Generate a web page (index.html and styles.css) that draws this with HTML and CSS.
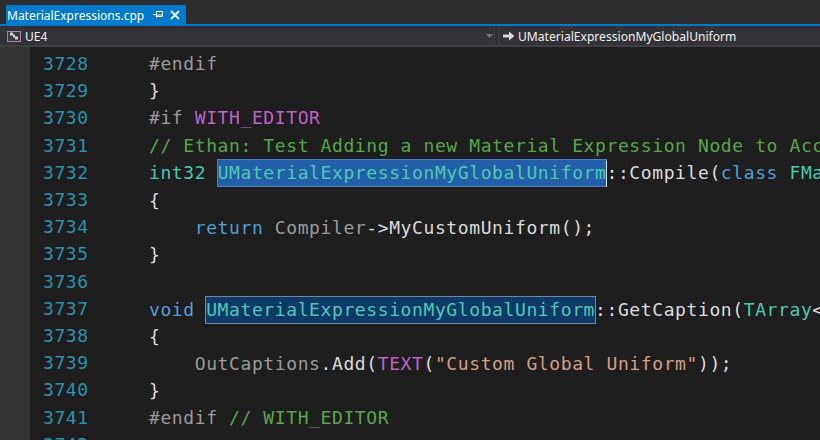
FILE: index.html
```html
<!DOCTYPE html>
<html lang="en">
<head>
<meta charset="utf-8">
<title>MaterialExpressions.cpp</title>
<link rel="stylesheet" href="styles.css">
</head>
<body>
<div class="tabstrip">
  <div class="tab">
    <span class="tab-name">MaterialExpressions.cpp</span>
    <svg class="tab-pin" width="11" height="9" viewBox="0 0 11 9"><path d="M0 4.500h3M3.500 1v7M3.500 1.500H9.500V6.500H3.500M3.500 5H9.500" fill="none" stroke="#fff" stroke-width="1"/></svg>
    <svg class="tab-close" width="10" height="10" viewBox="0 0 10 10"><path d="M1 1l8 8M9 1l-8 8" stroke="#e8f2fb" stroke-width="1.800" fill="none"/></svg>
  </div>
</div>
<div class="navbar">
  <div class="nav-left">
    <svg class="proj-icon" width="14" height="11" viewBox="0 0 14 11"><rect x=".5" y=".5" width="13" height="10" fill="#3a3a3d" stroke="#b27fb5"/><path d="M3 1.500h3v2h2v2h3v3H8v-2H6v-2H3z" fill="#d8d8d8"/></svg>
    <span class="nav-text">UE4</span>
    <svg class="nav-caret" width="7" height="4" viewBox="0 0 7 4"><path d="M0 0h7L3.500 4z" fill="#77777a"/></svg>
  </div>
  <div class="nav-right">
    <svg class="nav-arrow" width="12" height="10" viewBox="0 0 12 10"><path d="M0 3.500h6V.5L11.500 5 6 9.500v-3H0z" fill="#d8d8d8"/></svg>
    <span class="nav-text">UMaterialExpressionMyGlobalUniform</span>
  </div>
</div>
<div class="editor">
  <div class="gutter"></div>
  <div class="numbers">
    <div>3728</div><div>3729</div><div>3730</div><div>3731</div><div>3732</div><div>3733</div><div>3734</div><div>3735</div><div>3736</div><div>3737</div><div>3738</div><div>3739</div><div>3740</div><div>3741</div><div>3742</div>
  </div>
  <div class="code">
    <div class="line pp">#endif</div>
    <div class="line">}</div>
    <div class="line"><span class="pp">#if</span> <span class="macro">WITH_EDITOR</span></div>
    <div class="line cm">// Ethan: Test Adding a new Material Expression Node to Acc</div>
    <div class="line"><span class="ty">int32</span> <span class="hl hl-a ty">UMaterialExpressionMyGlobalUniform</span><span class="caret"></span>::Compile(<span class="kw">class</span> <span class="ty">FMa</span></div>
    <div class="line">{</div>
    <div class="line">    <span class="kw">return</span> <span class="pp">Compiler</span>-&gt;MyCustomUniform();</div>
    <div class="line">}</div>
    <div class="line">&nbsp;</div>
    <div class="line"><span class="kw">void</span> <span class="hl hl-b ty">UMaterialExpressionMyGlobalUniform</span>::GetCaption(<span class="ty">TArray</span>&lt;</div>
    <div class="line">{</div>
    <div class="line">    <span class="pp">OutCaptions</span>.Add(<span class="macro">TEXT</span>(<span class="str">"Custom Global Uniform"</span>));</div>
    <div class="line">}</div>
    <div class="line"><span class="pp">#endif</span> <span class="cm">// WITH_EDITOR</span></div>
  </div>
</div>
</body>
</html>
```
FILE: styles.css
```css
* { box-sizing: border-box; }
html, body { margin: 0; height: 100%; }
body {
  width: 820px;
  height: 440px;
  overflow: hidden;
  background: #2d2d30;
  display: flex;
  flex-direction: column;
  font-family: "Noto Sans", "Open Sans", sans-serif;
}
.tabstrip {
  height: 26px;
  flex: none;
  padding: 5px 0 0 6px;
  border-bottom: 2px solid #007acc;
}
.tab {
  width: 180px;
  height: 19px;
  background: #007acc;
  color: #fff;
  display: flex;
  align-items: center;
  font-size: 12px;
  padding: 1px 0 0 1px;
}
.tab-name { width: 146px; white-space: nowrap; }
.tab-pin { margin-left: 0; margin-top: -1px; }
.tab-close { margin-left: 6px; margin-top: -1px; }
.navbar {
  height: 21px;
  flex: none;
  display: flex;
  background: #2d2d30;
  border-bottom: 2px solid #3f3f46;
  color: #f1f1f1;
  font-size: 12.100px;
}
.nav-left {
  width: 495px;
  display: flex;
  align-items: center;
  background: #333337;
  padding: 1px 0 0 7px;
  border-right: 1px solid #3f3f46;
}
.proj-icon { flex: none; }
.nav-left .nav-text { margin-left: 4px; }
.nav-caret { margin-left: auto; margin-right: 1px; }
.nav-right {
  margin-left: 3px;
  flex: 1;
  display: flex;
  align-items: center;
  background: #333337;
  border-left: 1px solid #3f3f46;
  padding: 1px 0 0 4px;
}
.nav-arrow { margin-right: 3px; }
.editor {
  flex: 1;
  display: flex;
  background: #1e1e1e;
  overflow: hidden;
  font-family: "DejaVu Sans Mono", monospace;
  font-size: 18px;
  letter-spacing: .6px;
  line-height: 27.2px;
  padding-top: 3px;
}
.gutter {
  width: 30px;
  flex: none;
  background: #333333;
  margin-top: -3px;
}
.numbers {
  width: 119px;
  flex: none;
  padding-left: 13px;
  color: #2b91af;
}
.code {
  flex: 1;
  min-width: 0;
  color: #dcdcdc;
}
.line { white-space: pre; }
.pp { color: #9b9b9b; }
.macro { color: #bd63c5; }
.cm { color: #57a64a; }
.ty { color: #4ec9b0; }
.kw { color: #569cd6; }
.str { color: #d69d85; }
.hl { display: inline-block; line-height: 26px; }
.hl-a { background: #2160a8; box-shadow: 0 0 0 1px #4d7fbd; }
.hl-b { background: #0f3a68; box-shadow: 0 0 0 1px #6f87a5; }
.caret {
  display: inline-block;
  width: 1px;
  height: 26px;
  background: #dcdcdc;
  vertical-align: middle;
  margin-right: -1px;
}
```
